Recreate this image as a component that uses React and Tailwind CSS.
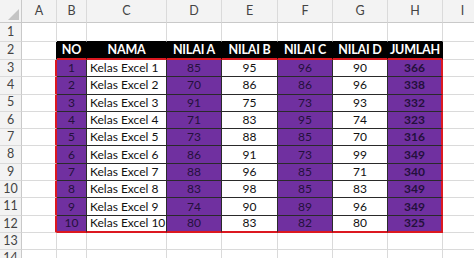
import React from "react";

const data = [
  [1, "Kelas Excel 1", 85, 95, 96, 90, 366],
  [2, "Kelas Excel 2", 70, 86, 86, 96, 338],
  [3, "Kelas Excel 3", 91, 75, 73, 93, 332],
  [4, "Kelas Excel 4", 71, 83, 95, 74, 323],
  [5, "Kelas Excel 5", 73, 88, 85, 70, 316],
  [6, "Kelas Excel 6", 86, 91, 73, 99, 349],
  [7, "Kelas Excel 7", 88, 96, 85, 71, 340],
  [8, "Kelas Excel 8", 83, 98, 85, 83, 349],
  [9, "Kelas Excel 9", 74, 90, 89, 96, 349],
  [10, "Kelas Excel 10", 80, 83, 82, 80, 325],
];

const cols = ["A", "B", "C", "D", "E", "F", "G", "H", "I"];
const headers = ["NO", "NAMA", "NILAI A", "NILAI B", "NILAI C", "NILAI D", "JUMLAH"];

function ColHeader({ label }) {
  return (
    <div className="flex items-center justify-center bg-[#f3f3f3] border-r border-b border-r-[#dadada] border-b-[#c9c9c9] text-[#444] text-[12.5px]">
      {label}
    </div>
  );
}

function RowHeader({ n }) {
  return (
    <div className="flex items-center justify-center bg-[#f3f3f3] border-r border-b border-r-[#c9c9c9] border-b-[#dadada] text-[#444] text-[12.5px]">
      {n}
    </div>
  );
}

function Empty({ extra = "border-r-[#dadada] border-b-[#dadada]" }) {
  return <div className={"border-r border-b " + extra} />;
}

export default function App() {
  const rows = [];
  rows.push(
    <div key="corner" className="relative bg-[#f3f3f3] border-r border-b border-r-[#c9c9c9] border-b-[#c9c9c9]">
      <svg width="22" height="23" className="absolute left-0 top-0">
        <polygon points="19,9 19,20 8,20" fill="#c4c4c4" />
      </svg>
    </div>
  );
  cols.forEach((c) => rows.push(<ColHeader key={"ch" + c} label={c} />));

  rows.push(<RowHeader key="rh1" n={1} />);
  cols.forEach((c, i) => {
    if (i >= 1 && i <= 7) {
      rows.push(<Empty key={"r1" + c} extra="border-r-[#dadada] border-b-black" />);
    } else {
      rows.push(<Empty key={"r1" + c} />);
    }
  });

  rows.push(<RowHeader key="rh2" n={2} />);
  rows.push(<Empty key="r2A" extra="border-r-black border-b-[#dadada]" />);
  headers.forEach((h, i) => {
    rows.push(
      <div
        key={"h" + i}
        className="flex items-center justify-center bg-black border-r border-r-black border-b-2 border-b-[#dc1820] text-white font-bold text-[12.5px] tracking-[-0.2px] whitespace-nowrap"
      >
        {h}
      </div>
    );
  });
  rows.push(<Empty key="r2I" />);

  data.forEach((r, ri) => {
    const last = ri === data.length - 1;
    rows.push(<RowHeader key={"rh" + (ri + 3)} n={ri + 3} />);
    rows.push(
      <div key={"a" + ri} className="border-r-2 border-r-[#dc1820] border-b border-b-[#dadada]" />
    );
    r.forEach((v, ci) => {
      const purple = ci === 0 || ci === 2 || ci === 4 || ci === 6;
      const isLastCol = ci === 6;
      let cls = "flex items-center text-[12px] whitespace-nowrap ";
      cls += purple ? "bg-[#7030a0] text-[#24103c] " : "bg-white text-[#111] ";
      cls += ci === 1 ? "justify-start pl-[3px] " : "justify-center ";
      cls += ci === 6 ? "font-bold " : "";
      cls += isLastCol ? "border-r-2 border-r-[#dc1820] " : "border-r border-r-[#2a2a2a] ";
      cls += last ? "border-b-2 border-b-[#dc1820] " : "border-b border-b-[#2a2a2a] ";
      rows.push(
        <div key={"c" + ri + "-" + ci} className={cls}>
          {v}
        </div>
      );
    });
    rows.push(<Empty key={"ri" + ri} />);
  });

  [13, 14].forEach((n) => {
    rows.push(<RowHeader key={"rh" + n} n={n} />);
    cols.forEach((c) => rows.push(<Empty key={"r" + n + c} />));
  });

  return (
    <div className="w-[474px] h-[258px] overflow-hidden bg-white font-['Lato',sans-serif] leading-none">
      <div className="grid grid-cols-[22px_35px_30px_80px_55px_56px_55px_55px_55px_40px] grid-rows-[23px_19px_18px_repeat(10,17.3px)_17px_17px]">
        {rows}
      </div>
    </div>
  );
}
